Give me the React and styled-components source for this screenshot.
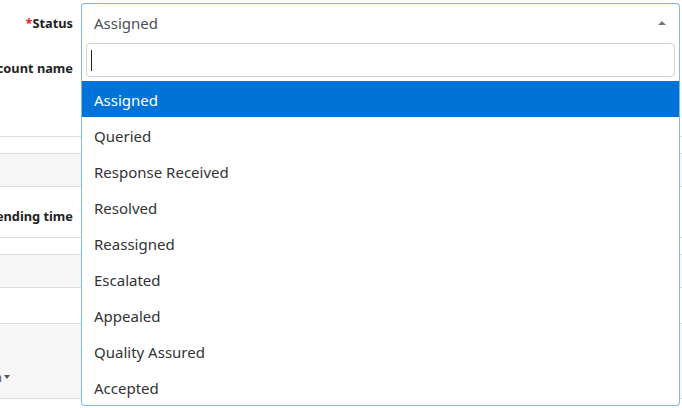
import React from 'react'
import styled, { createGlobalStyle } from 'styled-components'

const GlobalStyle = createGlobalStyle`
  html, body { margin: 0; padding: 0; background: #fff; }
  body { font-family: "Noto Sans", "Open Sans", sans-serif; color: #212529; overflow: hidden; }
`

const statusOptions = [
  'Assigned',
  'Queried',
  'Response Received',
  'Resolved',
  'Reassigned',
  'Escalated',
  'Appealed',
  'Quality Assured',
  'Accepted',
]

const rows = [
  { label: 'Account name', height: 92, top: 14 },
  { height: 17 },
  { height: 33, shade: true },
  { label: 'Pending time', height: 51, top: 20 },
  { height: 17 },
  { height: 33, shade: true },
  { height: 36 },
  { height: 75, shade: true, toggle: true },
]

const Page = styled.div`
  width: 682px;
  height: 408px;
  overflow: hidden;
`

const Row = styled.div`
  display: grid;
  grid-template-columns: 73px 1fr;
  column-gap: 8px;
  padding-right: 2px;
  height: ${p => p.$height}px;
  box-sizing: border-box;
  background: ${p => (p.$shade ? '#f6f6f6' : '#fff')};
  border-bottom: ${p => (p.$line ? '1px solid #dcdcdc' : 'none')};
`

const Label = styled.div`
  display: flex;
  justify-content: flex-end;
  align-items: ${p => (p.$top ? 'flex-start' : 'center')};
  padding-top: ${p => p.$top || 0}px;
  overflow: hidden;
  white-space: nowrap;
  font-size: 12.8px;
  font-weight: 700;
  color: #222;
`

const Required = styled.span`
  color: #e0262b;
`

const Toggle = styled.div`
  display: flex;
  justify-content: flex-end;
  align-items: center;
  width: 10px;
  overflow: hidden;
  white-space: nowrap;
  font-size: 13px;
  color: #555;
  padding-top: 32px;
`

const Caret = styled.span`
  display: inline-block;
  margin-left: 2px;
  border-left: 3.5px solid transparent;
  border-right: 3.5px solid transparent;
  border-top: 4px solid #555;
`

const Field = styled.div`
  position: relative;
  padding-top: 3px;
`

const Select = styled.div`
  position: relative;
  z-index: 2;
`

const Selection = styled.div`
  display: flex;
  align-items: center;
  justify-content: space-between;
  height: 40px;
  box-sizing: border-box;
  padding: 0 13px 1px 12px;
  border: 1px solid #80b9ee;
  border-bottom: none;
  border-radius: 4px 4px 0 0;
  background: #fff;
  font-size: 15px;
  color: #495057;
`

const UpArrow = styled.span`
  border-left: 4px solid transparent;
  border-right: 4px solid transparent;
  border-bottom: 4px solid #777;
  margin-bottom: 1px;
`

const Dropdown = styled.div`
  position: absolute;
  top: 100%;
  left: 0;
  right: 0;
  background: #fff;
  border: 1px solid #80b9ee;
  border-top: none;
  border-radius: 0 0 4px 4px;
`

const SearchWrap = styled.div`
  padding: 0 4px 4px 4px;
`

const Search = styled.div`
  display: flex;
  align-items: center;
  height: 34px;
  box-sizing: border-box;
  padding-left: 4px;
  border: 1px solid #cfd3d7;
  border-radius: 4px;
`

const TextCursor = styled.span`
  width: 1px;
  height: 21px;
  background: #222;
`

const Options = styled.ul`
  list-style: none;
  margin: 0;
  padding: 0;
`

const Option = styled.li`
  display: flex;
  align-items: center;
  height: 36px;
  box-sizing: border-box;
  padding: 2px 12px 0;
  font-size: 15px;
  color: ${p => (p.$active ? '#fff' : '#333')};
  background: ${p => (p.$active ? '#0073d9' : 'transparent')};
`

const App = () => {
  return (
    <>
      <GlobalStyle />
      <Page>
        <Row $height={45}>
          <Label>
            <Required>*</Required>Status
          </Label>
          <Field>
            <Select>
              <Selection>
                <span>Assigned</span>
                <UpArrow />
              </Selection>
              <Dropdown>
                <SearchWrap>
                  <Search>
                    <TextCursor />
                  </Search>
                </SearchWrap>
                <Options>
                  {statusOptions.map((o, i) => (
                    <Option key={o} $active={i === 0}>
                      {o}
                    </Option>
                  ))}
                </Options>
              </Dropdown>
            </Select>
          </Field>
        </Row>
        {rows.map((r, i) => (
          <Row key={i} $height={r.height} $shade={r.shade} $line>
            {r.toggle ? (
              <Toggle>
                Action<Caret />
              </Toggle>
            ) : (
              <Label $top={r.top}>{r.label}</Label>
            )}
            <div />
          </Row>
        ))}
      </Page>
    </>
  )
}

export default App
